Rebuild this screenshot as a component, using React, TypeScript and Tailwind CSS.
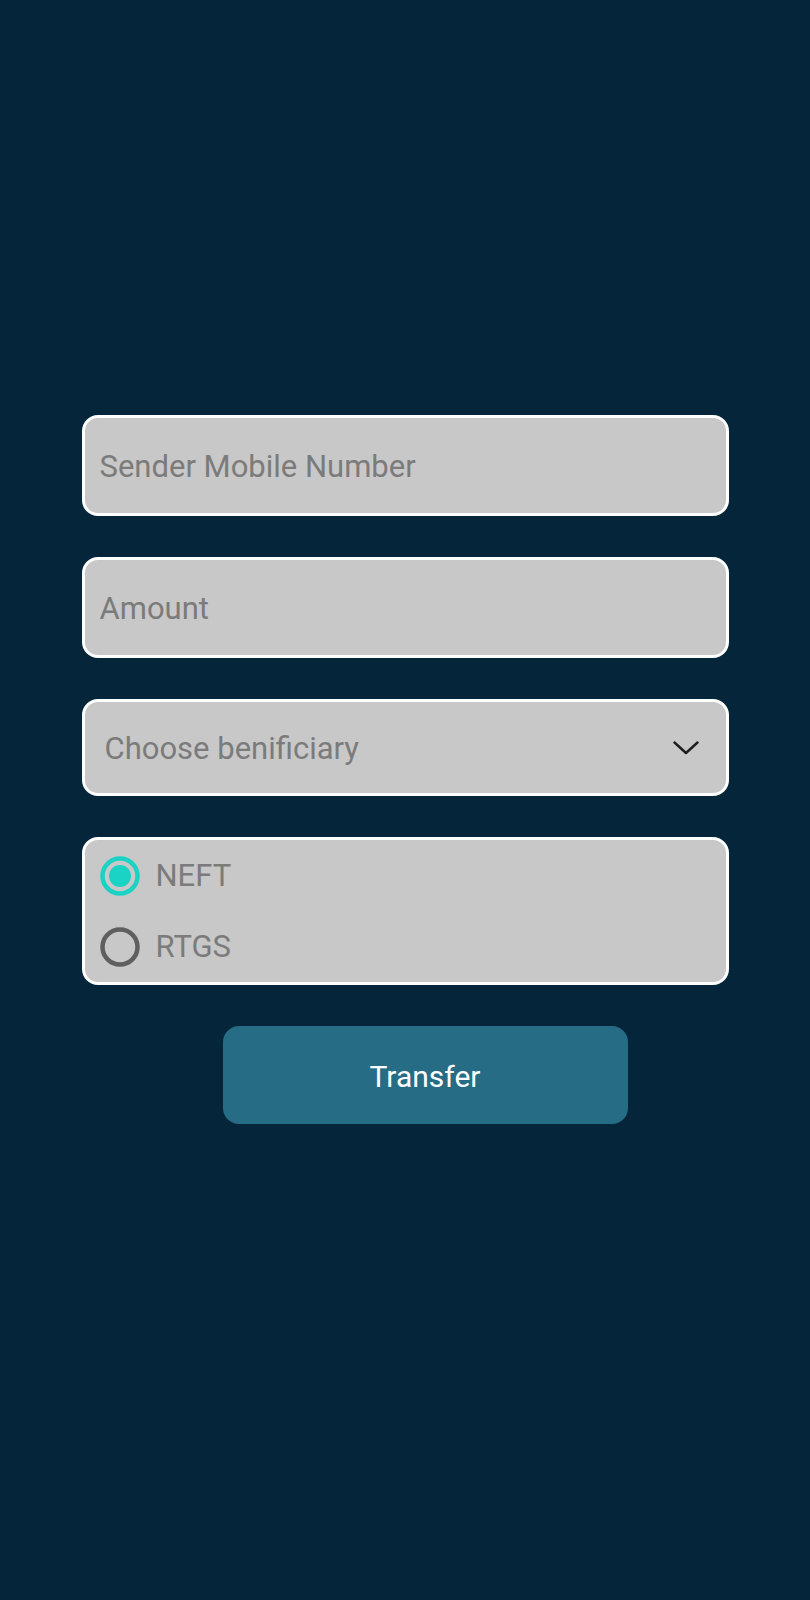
import { useState } from "react";

const fields = ["Sender Mobile Number", "Amount"];

function Radio({ checked }: { checked: boolean }) {
  return (
    <svg width="40" height="40" viewBox="0 0 40 40" className="shrink-0">
      <circle
        cx="20"
        cy="20"
        r="17.5"
        fill="none"
        stroke={checked ? "#1ad3c5" : "#5f5f5f"}
        strokeWidth="4.5"
      />
      {checked && <circle cx="20" cy="20" r="11" fill="#1ad3c5" />}
    </svg>
  );
}

export default function App() {
  const [mode, setMode] = useState("NEFT");

  return (
    <div
      className="min-h-[1600px] w-full bg-[#05263a] pt-[415px]"
      style={{ fontFamily: "Roboto, 'Noto Sans', sans-serif" }}
    >
      <div className="mx-auto flex w-[647px] flex-col gap-[41px]">
        {/* Text inputs */}
        {fields.map((label) => (
          <div
            key={label}
            className="flex h-[101px] items-center rounded-[16px] border-[3px] border-white bg-[#c8c8c8] px-[15px] pt-[3px]"
          >
            <input
              placeholder={label}
              className="w-full bg-transparent text-[31px] text-[#555] outline-none placeholder:text-[#7b7b7b]"
            />
          </div>
        ))}

        {/* Beneficiary dropdown */}
        <div className="flex h-[97px] items-center justify-between rounded-[16px] border-[3px] border-white bg-[#c8c8c8] pl-[20px] pr-[27px]">
          <span className="pt-[3px] text-[31px] text-[#7b7b7b]">Choose benificiary</span>
          <svg width="26" height="14" viewBox="0 0 26 14" fill="none">
            <path
              d="M1.5 1.5 L13 12 L24.5 1.5"
              stroke="#1e1e1e"
              strokeWidth="2.4"
              strokeLinecap="round"
              strokeLinejoin="round"
            />
          </svg>
        </div>

        {/* Transfer mode */}
        <div className="flex flex-col rounded-[16px] border-[3px] border-white bg-[#c8c8c8] px-[15px]">
          {["NEFT", "RTGS"].map((m) => (
            <button
              key={m}
              onClick={() => setMode(m)}
              className="flex h-[71px] items-center gap-[16px] text-left"
            >
              <Radio checked={mode === m} />
              <span className="pt-[2px] text-[31px] text-[#7b7b7b]">{m}</span>
            </button>
          ))}
        </div>

        <button className="ml-[141px] h-[98px] w-[405px] rounded-[16px] bg-[#266c85] pt-[2px] text-[30px] text-white">
          Transfer
        </button>
      </div>
    </div>
  );
}
